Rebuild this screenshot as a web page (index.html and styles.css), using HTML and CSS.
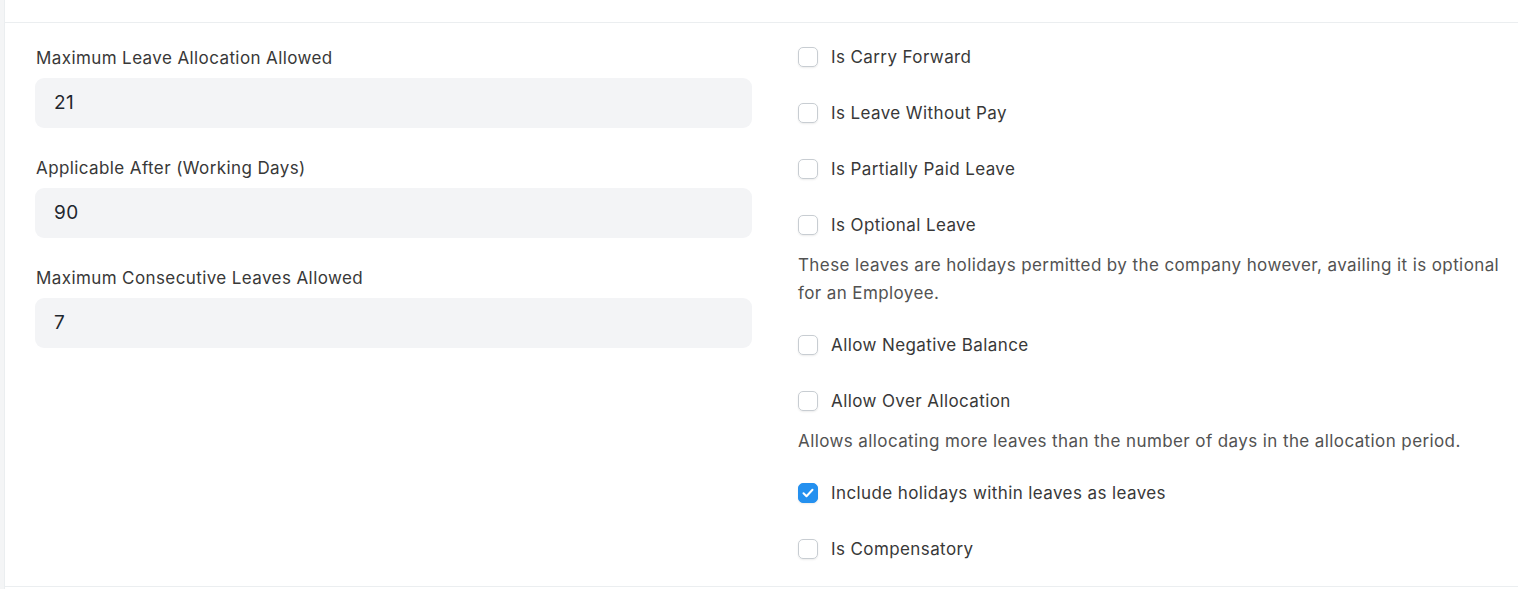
FILE: index.html
```html
<!DOCTYPE html>
<html>
<head>
    <title>Leave Type</title>
    <link rel="stylesheet" href="styles.css">
</head>
<body>

<div class="card">
    <div class="card-head"></div>
    <div class="section">
        <div class="column">
            <div class="field">
                <label class="label">Maximum Leave Allocation Allowed</label>
                <div class="input">21</div>
            </div>
            <div class="field">
                <label class="label">Applicable After (Working Days)</label>
                <div class="input">90</div>
            </div>
            <div class="field">
                <label class="label">Maximum Consecutive Leaves Allowed</label>
                <div class="input">7</div>
            </div>
        </div>
        <div class="column">
            <div class="check">
                <span class="box"></span>
                <span>Is Carry Forward</span>
            </div>
            <div class="check">
                <span class="box"></span>
                <span>Is Leave Without Pay</span>
            </div>
            <div class="check">
                <span class="box"></span>
                <span>Is Partially Paid Leave</span>
            </div>
            <div class="check with-help">
                <span class="box"></span>
                <span>Is Optional Leave</span>
            </div>
            <p class="help">These leaves are holidays permitted by the company however, availing it is optional for an Employee.</p>
            <div class="check">
                <span class="box"></span>
                <span>Allow Negative Balance</span>
            </div>
            <div class="check with-help">
                <span class="box"></span>
                <span>Allow Over Allocation</span>
            </div>
            <p class="help">Allows allocating more leaves than the number of days in the allocation period.</p>
            <div class="check">
                <span class="box checked">
                    <svg width="12" height="10" viewBox="0 0 12 10"><path d="M1.5 5.2l3 3 6-6.4" fill="none" stroke="white" stroke-width="2" stroke-linecap="round" stroke-linejoin="round"/></svg>
                </span>
                <span>Include holidays within leaves as leaves</span>
            </div>
            <div class="check">
                <span class="box"></span>
                <span>Is Compensatory</span>
            </div>
        </div>
    </div>
</div>

</body>
</html>
```

FILE: styles.css
```css
body {
    margin: 0;
    background-color: #f4f5f6;
    font-family: Inter, "Noto Sans", sans-serif;
    color: #383838;
    letter-spacing: 0.4px;
}

.card {
    margin-left: 4px;
    background-color: white;
    border-left: 1px solid #ebeef0;
    height: 589px;
}

.card-head {
    height: 22px;
    border-bottom: 1px solid #ebeef0;
}

.section {
    display: grid;
    grid-template-columns: 717px 717px;
    column-gap: 46px;
    padding: 22px 0 0 30px;
    height: 541px;
    border-bottom: 1px solid #ebeef0;
}

.field {
    margin-bottom: 27px;
}

.label {
    display: block;
    font-size: 17px;
    line-height: 24px;
    color: #383838;
    margin-bottom: 9px;
    padding: 1px 0 0 1px;
    height: 23px;
}

.input {
    height: 50px;
    line-height: 50px;
    border-radius: 9px;
    background-color: #f3f4f6;
    padding: 0 19px;
    font-size: 19px;
    color: #1f272e;
}

.check {
    display: flex;
    align-items: center;
    gap: 13px;
    font-size: 17px;
    line-height: 24px;
    margin-bottom: 32px;
}

.check.with-help {
    margin-bottom: 14px;
}

.box {
    width: 18px;
    height: 18px;
    border: 1px solid #c8cdd2;
    border-radius: 5px;
    box-shadow: 0 1px 2px rgba(0, 0, 0, 0.08);
    display: flex;
    align-items: center;
    justify-content: center;
}

.box.checked {
    background-color: #2490ef;
    border-color: #2490ef;
}

.help {
    margin: 0 0 26px 0;
    font-size: 17px;
    line-height: 28px;
    color: #525252;
    padding-right: 8px;
}
```
